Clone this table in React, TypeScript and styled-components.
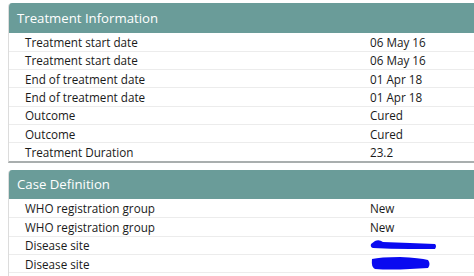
import React from "react";
import styled, { createGlobalStyle } from "styled-components";

const Global = createGlobalStyle`
  html, body { margin: 0; padding: 0; background: #ffffff; overflow: hidden; }
  body { font-family: "Open Sans", "Noto Sans", sans-serif; }
`;

const Page = styled.div`
  display: flex;
  flex-direction: column;
  gap: 7px;
  padding: 3px 0 0 8px;
  width: 520px;
`;

const Panel = styled.section`
  border: 1px solid #dcdcdc;
  border-top: none;
  border-bottom: 2px solid #a9aeae;
  border-radius: 4px 4px 0 0;
  background: #fff;
  overflow: hidden;
`;

const Header = styled.h2`
  margin: 0;
  height: 29.5px;
  display: flex;
  align-items: center;
  padding-left: 8px;
  background: #6a9c99;
  color: #ffffff;
  font-size: 13.2px;
  font-weight: 400;
`;

const Row = styled.div`
  display: grid;
  grid-template-columns: 361px 1fr;
  height: 18.3px;
  align-items: center;
  border-top: 1px solid #ececec;
  box-sizing: border-box;
  font-size: 11.7px;
  color: #1a1a1a;
  &:first-of-type { border-top: none; }
`;

const Label = styled.div`
  padding-left: 16px;
  white-space: nowrap;
`;

const Value = styled.div`
  white-space: nowrap;
`;

const Redact = styled.svg`
  display: block;
`;

const treatment: [string, string][] = [
  ["Treatment start date", "06 May 16"],
  ["Treatment start date", "06 May 16"],
  ["End of treatment date", "01 Apr 18"],
  ["End of treatment date", "01 Apr 18"],
  ["Outcome", "Cured"],
  ["Outcome", "Cured"],
  ["Treatment Duration", "23.2"],
];

const Scribble1 = () => (
  <Redact width="68" height="12" viewBox="0 0 68 12">
    <path d="M1 5 L5 2 Q9 0 13 3 L40 4 L65 5 Q67 7 65 10 L40 10 Q20 10 3 9 Q0 8 1 5 Z" fill="#0a0af0" />
  </Redact>
);

const Scribble2 = () => (
  <Redact width="62" height="14" viewBox="0 0 62 14">
    <path d="M2 2 Q10 0 30 0 Q50 1 58 3 Q61 7 58 11 L40 12 Q20 13 5 12 Q1 10 2 2 Z" fill="#0a0af0" />
  </Redact>
);

export default function App() {
  return (
    <>
      <Global />
      <Page>
        <Panel>
          <Header>Treatment Information</Header>
          {treatment.map(([l, v], i) => (
            <Row key={i}>
              <Label>{l}</Label>
              <Value>{v}</Value>
            </Row>
          ))}
        </Panel>
        <Panel>
          <Header>Case Definition</Header>
          <Row>
            <Label>WHO registration group</Label>
            <Value>New</Value>
          </Row>
          <Row>
            <Label>WHO registration group</Label>
            <Value>New</Value>
          </Row>
          <Row>
            <Label>Disease site</Label>
            <Value><Scribble1 /></Value>
          </Row>
          <Row>
            <Label>Disease site</Label>
            <Value><Scribble2 /></Value>
          </Row>
          <Row>
            <Label />
            <Value />
          </Row>
        </Panel>
      </Page>
    </>
  );
}
